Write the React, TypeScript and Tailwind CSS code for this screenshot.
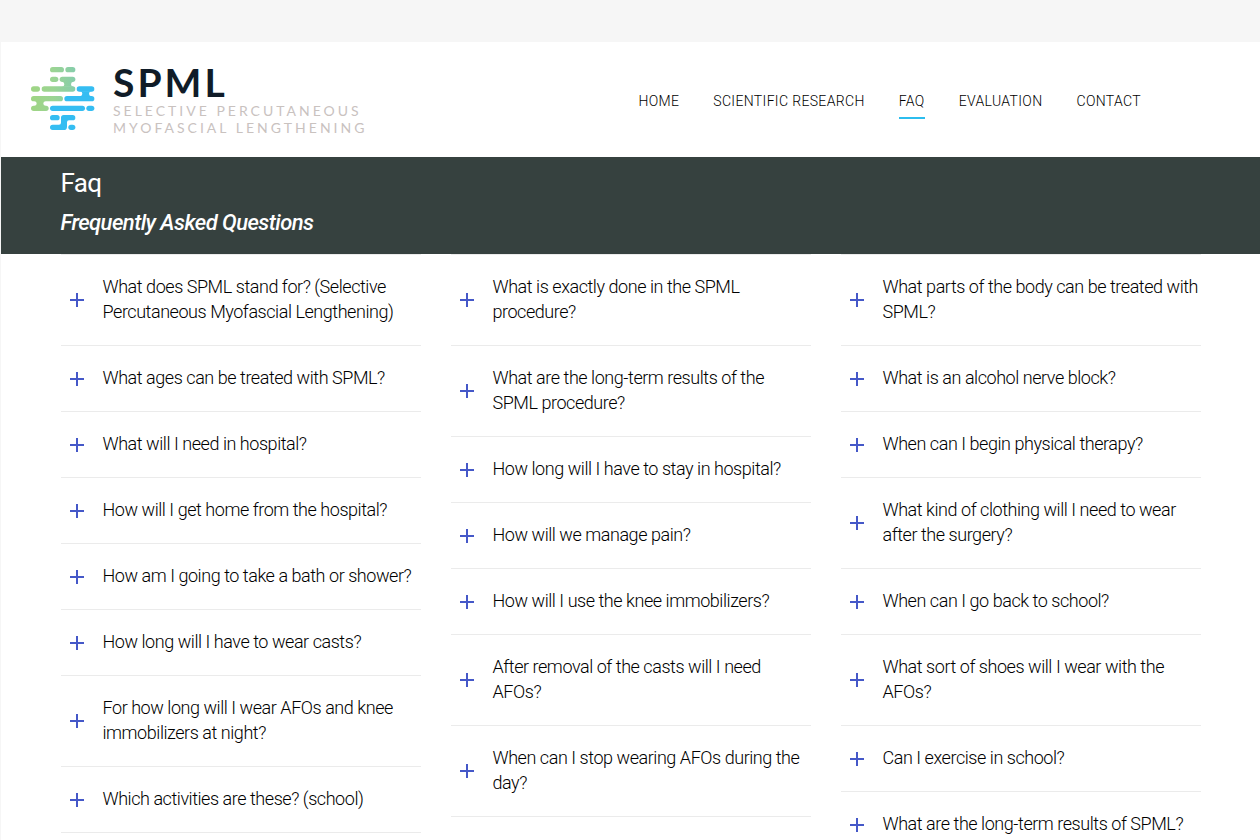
import React from "react";

const navItems = ["Home", "Scientific Research", "Faq", "Evaluation", "Contact"];

const columns: string[][] = [
  [
    "What does SPML stand for? (Selective Percutaneous Myofascial Lengthening)",
    "What ages can be treated with SPML?",
    "What will I need in hospital?",
    "How will I get home from the hospital?",
    "How am I going to take a bath or shower?",
    "How long will I have to wear casts?",
    "For how long will I wear AFOs and knee immobilizers at night?",
    "Which activities are these? (school)",
  ],
  [
    "What is exactly done in the SPML procedure?",
    "What are the long-term results of the SPML procedure?",
    "How long will I have to stay in hospital?",
    "How will we manage pain?",
    "How will I use the knee immobilizers?",
    "After removal of the casts will I need AFOs?",
    "When can I stop wearing AFOs during the day?",
  ],
  [
    "What parts of the body can be treated with SPML?",
    "What is an alcohol nerve block?",
    "When can I begin physical therapy?",
    "What kind of clothing will I need to wear after the surgery?",
    "When can I go back to school?",
    "What sort of shoes will I wear with the AFOs?",
    "Can I exercise in school?",
    "What are the long-term results of SPML?",
  ],
];

function LogoMark() {
  return (
    <svg className="h-[66px] w-[66px] shrink-0" viewBox="30 33 198 198" aria-hidden="true">
      <defs>
        <linearGradient id="leaf" gradientUnits="userSpaceOnUse" x1="33" y1="0" x2="166" y2="0">
          <stop offset="0" stopColor="#9fd584" />
          <stop offset="0.5" stopColor="#9bd493" />
          <stop offset="1" stopColor="#86cdab" />
        </linearGradient>
      </defs>
      <g fill="url(#leaf)">
        <rect x="90" y="36" width="42" height="16" rx="8" />
        <rect x="136" y="36" width="30" height="16" rx="8" />
        <rect x="90" y="65" width="25" height="16" rx="8" />
        <rect x="119" y="65" width="47" height="16" rx="8" />
        <rect x="33" y="94" width="27" height="16" rx="8" />
        <rect x="65" y="94" width="101" height="16" rx="8" />
        <path d="M126 80H160Q153 81 153 87.500Q153 94 160 95H126Q133 94 133 87.500Q133 81 126 80Z" />
        <rect x="33" y="123" width="96" height="16" rx="8" />
        <rect x="33" y="152" width="53" height="16" rx="8" />
        <path d="M43 138H77Q70 139 70 145.500Q70 152 77 153H43Q50 152 50 145.500Q50 139 43 138Z" />
      </g>
      <g fill="#35bdf2">
        <rect x="170" y="94" width="53" height="16" rx="8" />
        <rect x="133" y="123" width="90" height="16" rx="8" />
        <path d="M180 109H214Q207 110 207 116.500Q207 123 214 124H180Q187 123 187 116.500Q187 110 180 109Z" />
        <rect x="90" y="152" width="105" height="16" rx="8" />
        <rect x="199" y="152" width="24" height="16" rx="8" />
        <rect x="90" y="180" width="29" height="16" rx="8" />
        <path d="M131 180H158A8 8 0 0 1 158 196H147Q141 196 141 202V215Q141 225 131 225H98A8 8 0 0 1 98 209H117Q123 209 123 203V188Q123 180 131 180Z" />
        <rect x="145" y="209" width="21" height="16" rx="8" />
      </g>
    </svg>
  );
}

function PlusIcon() {
  return (
    <svg className="h-[14px] w-[14px] shrink-0" viewBox="0 0 14 14" aria-hidden="true">
      <path d="M6 0h2v6h6v2H8v6H6V8H0V6h6z" fill="#4558c8" />
    </svg>
  );
}

function Question({ text }: { text: string }) {
  return (
    <li className="border-b border-[#ebebeb]">
      <button
        type="button"
        aria-expanded="false"
        className="flex w-full items-center gap-[19px] py-[19px] pl-[9px] text-left text-lg leading-[25px] font-light tracking-tight text-black"
      >
        <PlusIcon />
        <span className="pb-[2px]">{text}</span>
      </button>
    </li>
  );
}

export default function App() {
  return (
    <div className="h-screen overflow-hidden border-l border-[#f6f6f6] bg-white font-['Roboto',sans-serif]">
      <div className="h-[42px] bg-[#f6f6f6]" />
      <header className="flex h-[115px] items-center justify-between pr-[119px] pb-[2px] pl-[29px]">
        <a href="#home" className="flex items-center gap-[17px] font-['Lato',sans-serif]">
          <LogoMark />
          <span className="flex flex-col">
            <span className="text-[39px] leading-[40px] font-bold tracking-[3px] text-[#101c28]">SPML</span>
            <span className="text-sm leading-[17px] tracking-[3px] text-[#c9c2bf]">SELECTIVE PERCUTANEOUS</span>
            <span className="text-sm leading-[17px] tracking-[3px] text-[#c9c2bf]">MYOFASCIAL LENGTHENING</span>
          </span>
        </a>
        <nav className="mt-1 flex gap-[34px] text-sm leading-5 font-light tracking-wide text-black uppercase">
          {navItems.map((item) => (
            <a
              key={item}
              href={"#" + item.toLowerCase().replace(" ", "-")}
              className={
                item === "Faq"
                  ? "border-b-2 border-[#2cbdee] pt-2 pb-[6px]"
                  : "border-b-2 border-transparent pt-2 pb-[6px]"
              }
            >
              {item}
            </a>
          ))}
        </nav>
      </header>
      <section className="bg-[#36413f] text-white">
        <div className="mx-auto max-w-[1140px] pt-2 pb-[14px]">
          <h1 className="text-[26px] leading-9 tracking-tight">Faq</h1>
          <h2 className="pt-1 text-[22px] leading-[35px] font-medium tracking-tight italic">Frequently Asked Questions</h2>
        </div>
      </section>
      <main className="mx-auto grid max-w-[1140px] grid-cols-3 gap-[30px]">
        {columns.map((questions) => (
          <ul key={questions[0]} className="border-t border-[#ebebeb]">
            {questions.map((text) => (
              <Question key={text} text={text} />
            ))}
          </ul>
        ))}
      </main>
    </div>
  );
}
